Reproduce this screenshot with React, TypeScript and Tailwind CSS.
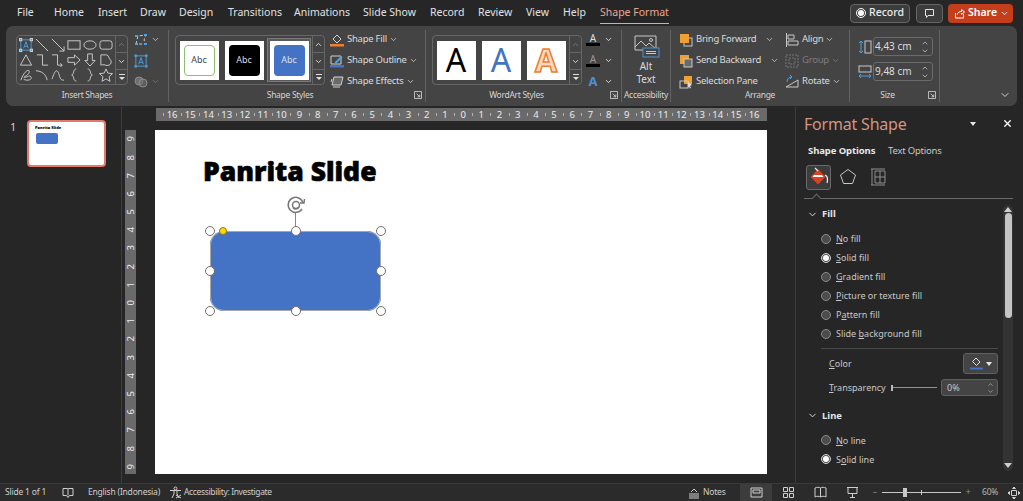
import { ReactNode } from 'react'
import { ChevronDown, ChevronUp, X } from 'lucide-react'

const tabs = [
  { name: 'File', w: 'w-[37px]' },
  { name: 'Home', w: 'w-[44px]' },
  { name: 'Insert', w: 'w-[42px]' },
  { name: 'Draw', w: 'w-[39px]' },
  { name: 'Design', w: 'w-[49px]' },
  { name: 'Transitions', w: 'w-[66px]' },
  { name: 'Animations', w: 'w-[69px]' },
  { name: 'Slide Show', w: 'w-[67px]' },
  { name: 'Record', w: 'w-[48px]' },
  { name: 'Review', w: 'w-[48px]' },
  { name: 'View', w: 'w-[37px]' },
  { name: 'Help', w: 'w-[37px]' },
]

const rulerTop = [16, 15, 14, 13, 12, 11, 10, 9, 8, 7, 6, 5, 4, 3, 2, 1, 0, 1, 2, 3, 4, 5, 6, 7, 8, 9, 10, 11, 12, 13, 14, 15, 16]
const rulerSide = [9, 8, 7, 6, 5, 4, 3, 2, 1, 0, 1, 2, 3, 4, 5, 6, 7, 8, 9]

// gallery glyphs, drawn on a 15x15 box
const shapeGlyphs = [
  <g key="a"><rect x="2" y="2" width="11" height="11" fill="none" stroke="#4aa3e0" /><path d="M5 11l2.500-7 2.500 7M6 9h3" stroke="#4aa3e0" fill="none" /><rect x="0.500" y="0.500" width="2.500" height="2.500" fill="#4aa3e0" /><rect x="12" y="0.500" width="2.500" height="2.500" fill="#4aa3e0" /><rect x="0.500" y="12" width="2.500" height="2.500" fill="#4aa3e0" /><rect x="12" y="12" width="2.500" height="2.500" fill="#4aa3e0" /></g>,
  <path key="b" d="M1 1l13 13" />,
  <path key="c" d="M1 1l13 13M14 9v5h-5" />,
  <rect key="d" x="1" y="3" width="13" height="9" />,
  <ellipse key="e" cx="7.500" cy="7.500" rx="6.500" ry="4.500" />,
  <rect key="f" x="1" y="3" width="13" height="9" rx="2.500" />,
  <path key="g" d="M7.500 2l6 11h-12z" />,
  <path key="h" d="M2 2h6v11h6" />,
  <path key="i" d="M1 2h6v11h5M10 11l2 2-2 2" />,
  <path key="j" d="M1 5h7V2l6 5.500-6 5.500V10H1z" />,
  <path key="k" d="M5 1h5v7h3l-5.500 6L2 8h3z" />,
  <path key="l" d="M2 2h6c3 0 2 5 5 6v2c0 3-4 4-6 3-2-1-5 0-5 0z" />,
  <path key="m" d="M2 13c3-9 9-13 9-9S3 10 6 10s6-3 7 0-5 4-8 2" />,
  <path key="n" d="M1 3c6 0 11 4 12 10" />,
  <path key="o" d="M1 12c2-5 3-9 5-9s3 6 4 8 2 2 4 2" />,
  <path key="p" d="M10 1C6 1 8 7 5 7.500 8 8 6 14 10 14" />,
  <path key="q" d="M5 1c4 0 2 6 5 6.500C7 8 9 14 5 14" />,
  <path key="r" d="M7.500 1l2 4.500 5 .500-3.700 3.300 1 5-4.300-2.600-4.300 2.600 1-5L.500 6l5-.500z" />,
]

function Chev({ className = 'text-[#d8d8d8]' }: { className?: string }) {
  return <ChevronDown size={9} strokeWidth={2} className={className} />
}

function RibbonGroup({ label, width, launcher, children }: { label: string; width: string; launcher?: boolean; children: ReactNode }) {
  return (
    <div className={`${width} my-1 flex flex-col border-r border-[#626262] h-[72px] shrink-0`}>
      <div className="h-[59px] pt-[5px] flex">{children}</div>
      <div className={`relative h-[13px] flex items-center justify-center text-[8.500px] tracking-[-0.3px] text-[#d4d4d4] whitespace-nowrap ${launcher ? 'pr-[14px]' : ''}`}>
        {label}
        {launcher && (
          <svg width="8" height="8" viewBox="0 0 9 9" className="absolute right-[3px] top-[2px]" fill="none" stroke="#cfcfcf">
            <path d="M.5 8.500V.5h8v8zM3 3l3.500 3.500M6.500 4v2.500H4" />
          </svg>
        )}
      </div>
    </div>
  )
}

function ScrollButtons({ dim }: { dim?: boolean }) {
  return (
    <div className="w-[12px] flex flex-col border-l border-[#666] text-[#e0e0e0]">
      <div className="h-[17px] flex items-center justify-center border-b border-[#666]">
        <ChevronUp size={9} strokeWidth={2.4} className={dim ? 'text-[#777]' : ''} />
      </div>
      <div className="h-[17px] flex items-center justify-center border-b border-[#666]">
        <ChevronDown size={9} strokeWidth={2.4} />
      </div>
      <div className="flex-1 flex flex-col items-center justify-center">
        <div className="w-[6px] h-px bg-[#e0e0e0] mb-[2px]" />
        <div className="w-0 h-0 border-x-[3px] border-x-transparent border-t-[3px] border-t-[#e0e0e0]" />
      </div>
    </div>
  )
}

function Gallery({ children, dim }: { children: ReactNode; dim?: boolean }) {
  return (
    <div className="h-[50px] flex border border-[#666] rounded-[4px]">
      {children}
      <ScrollButtons dim={dim} />
    </div>
  )
}

function Swatch({ selected, children }: { selected?: boolean; children: ReactNode }) {
  return (
    <div className={`w-[44px] h-[44px] flex items-center justify-center ${selected ? 'border border-[#7a7a7a] bg-[#5a5a5a]' : ''}`}>
      <div className="w-[39px] h-[39px] bg-white flex items-center justify-center">{children}</div>
    </div>
  )
}

function CommandRow({ icon, label, chevron, disabled, textW }: { icon: ReactNode; label: string; chevron?: boolean; disabled?: boolean; textW?: string }) {
  return (
    <div className="h-[21px] shrink-0 flex items-center">
      <div className="w-[14px] h-[14px] flex items-center justify-center">{icon}</div>
      <span className={`ml-[3px] text-[9.500px] tracking-[-0.25px] whitespace-nowrap ${textW ?? ''} ${disabled ? 'text-[#7c7c7c]' : 'text-[#dcdcdc]'}`}>{label}</span>
      {chevron && <Chev className={`ml-[2px] ${disabled ? 'text-[#7c7c7c]' : 'text-[#d8d8d8]'}`} />}
    </div>
  )
}

function Spinner({ value }: { value: string }) {
  return (
    <div className="w-[60px] h-[19px] flex items-center justify-between border border-[#6a6a6a] rounded-[3px] pl-[1px] pr-[3px] text-[10px] text-[#dcdcdc]">
      {value}
      <div className="flex flex-col text-[#d8d8d8]">
        <ChevronUp size={8} strokeWidth={2} />
        <ChevronDown size={8} strokeWidth={2} />
      </div>
    </div>
  )
}

function Radio({ label, checked }: { label: ReactNode; checked?: boolean }) {
  return (
    <div className="h-[19px] flex items-center pl-[17px] text-[9px] text-[#c8c8c8]">
      <div className={`w-[10px] h-[10px] rounded-full border flex items-center justify-center ${checked ? 'border-[#cfcfcf] bg-[#555]' : 'border-[#8a8a8a] bg-[#4c4c4c]'}`}>
        {checked && <div className="w-[6px] h-[6px] rounded-full bg-white" />}
      </div>
      <span className="ml-[5px] whitespace-nowrap">{label}</span>
    </div>
  )
}

function SectionHead({ label }: { label: string }) {
  return (
    <div className="flex items-center pl-[3px] text-[9.500px] font-bold text-[#e4e4e4]">
      <ChevronDown size={11} strokeWidth={2} />
      <span className="ml-[4px]">{label}</span>
    </div>
  )
}

function Handle({ pos }: { pos: string }) {
  return <div className={`absolute w-[10px] h-[10px] rounded-full bg-white border border-[#6f6f6f] ${pos}`} />
}

function StatusIcon({ children, active }: { children: ReactNode; active?: boolean }) {
  return (
    <div className={`w-[32px] h-[18px] flex items-center justify-center ${active ? 'bg-[#3c3c3c]' : ''}`}>
      <svg width="13" height="13" viewBox="0 0 13 13" fill="none" stroke="#d0d0d0">{children}</svg>
    </div>
  )
}

export default function App() {
  return (
    <div className="w-[1023px] h-[501px] flex flex-col overflow-hidden bg-[#262626] text-white font-['Noto_Sans',sans-serif]">
      {/* Tabs */}
      <div className="h-[26px] flex items-center pl-[17px] relative">
        {tabs.map((t) => (
          <div key={t.name} className={`${t.w} shrink-0 text-[10.5px] text-[#e2e2e2] whitespace-nowrap`}>{t.name}</div>
        ))}
        <div className="h-[26px] flex items-center text-[10.5px] text-[#e9a793] whitespace-nowrap border-b-0 relative">
          Shape Format
          <div className="absolute left-0 right-0 bottom-[2px] h-px bg-[#e9a793]" />
        </div>
        <div className="ml-auto mr-[10px] flex items-center">
          <div className="w-[60px] h-[19px] flex items-center justify-center border border-[#666] bg-[#3c3c3c] rounded-[4px] text-[10.5px] font-medium text-[#ececec]">
            <div className="w-[10px] h-[10px] rounded-full border border-white flex items-center justify-center mr-[3px]">
              <div className="w-[6px] h-[6px] rounded-full bg-white" />
            </div>
            Record
          </div>
          <div className="ml-[6px] w-[27px] h-[19px] flex items-center justify-center border border-[#666] bg-[#3c3c3c] rounded-[4px]">
            <svg width="11" height="11" viewBox="0 0 11 11" fill="none" stroke="#e4e4e4"><path d="M1.500 1.500h8v6H4L2.500 9.500v-2h-1z" /></svg>
          </div>
          <div className="ml-[5px] w-[65px] h-[19px] flex items-center pl-[6px] bg-[#c43e1c] rounded-[4px] text-[10.5px] font-semibold text-white">
            <svg width="11" height="11" viewBox="0 0 11 11" fill="none" stroke="#fff"><path d="M1.500 5v5h8V6M3.500 6.500c0-2 2-3 4-3V1.500l3 2.500-3 2.500V5" /></svg>
            <span className="ml-[3px]">Share</span>
            <ChevronDown size={9} strokeWidth={2.4} className="ml-auto mr-[4px]" />
          </div>
        </div>
      </div>

      {/* Ribbon */}
      <div className="mx-[6px] h-[80px] shrink-0 flex bg-[#444444] rounded-[7px]">
        <RibbonGroup label="Insert Shapes" width="w-[163px]">
          <div className="pl-[10px] flex">
            <Gallery dim>
              <div className="w-[98px] grid grid-cols-6 grid-rows-3 px-[1px] py-[1px]">
                {shapeGlyphs.map((g, i) => (
                  <div key={i} className="flex items-center justify-center">
                    <svg width="14" height="14" viewBox="0 0 15 15" fill="none" stroke="#cfcfcf">{g}</svg>
                  </div>
                ))}
              </div>
            </Gallery>
            <div className="ml-[6px] -mt-[6px] flex flex-col">
              <div className="h-[21px] shrink-0 flex items-center">
                <svg width="14" height="14" viewBox="0 0 14 14" fill="none"><path d="M2 11L4 3l8-1-2 5 2 4z" stroke="#cfcfcf" strokeDasharray="3 2" /><path d="M1 2h3v2H1zM10 1h3v2h-3zM1 10h3v2H1zM10 10h3v2h-3z" fill="#4aa3e0" /></svg>
                <Chev className="ml-[3px] text-[#d8d8d8]" />
              </div>
              <div className="h-[21px] shrink-0 flex items-center">
                <svg width="14" height="14" viewBox="0 0 15 15">{shapeGlyphs[0]}</svg>
              </div>
              <div className="h-[21px] shrink-0 flex items-center">
                <svg width="14" height="14" viewBox="0 0 14 14" fill="#6e6e6e" stroke="#8c8c8c"><circle cx="5" cy="6" r="4" /><circle cx="9" cy="8" r="4" fillOpacity="0.600" /></svg>
                <Chev className="ml-[3px] text-[#777]" />
              </div>
            </div>
          </div>
        </RibbonGroup>

        <RibbonGroup label="Shape Styles" width="w-[257px]" launcher>
          <div className="pl-[6px] flex">
            <Gallery>
              <div className="flex items-center gap-px px-[1px]">
                <Swatch>
                  <div className="w-[31px] h-[31px] rounded-[4px] border border-[#8fbf6e] bg-white flex items-center justify-center text-[9px] text-[#444]">Abc</div>
                </Swatch>
                <Swatch>
                  <div className="w-[31px] h-[31px] rounded-[4px] bg-black flex items-center justify-center text-[9px] text-[#ddd]">Abc</div>
                </Swatch>
                <Swatch selected>
                  <div className="w-[31px] h-[31px] rounded-[4px] bg-[#4472c4] flex items-center justify-center text-[9px] text-[#d8e2f4]">Abc</div>
                </Swatch>
              </div>
            </Gallery>
            <div className="ml-[5px] -mt-[6px] flex flex-col">
              <CommandRow
                label="Shape Fill"
                chevron
                icon={<svg width="14" height="14" viewBox="0 0 14 14" fill="none"><path d="M3 6l4-4 4 4-4 4z" stroke="#d0d0d0" /><rect y="11" width="14" height="2.500" fill="#ed7d31" /></svg>}
              />
              <CommandRow
                label="Shape Outline"
                chevron
                icon={<svg width="14" height="14" viewBox="0 0 14 14" fill="none"><path d="M11 2H1v8h10z" stroke="#d0d0d0" /><path d="M5 8l6-6 1.500 1.500-6 6H5z" fill="#4aa3e0" /><rect y="11" width="14" height="2.500" fill="#4472c4" /></svg>}
              />
              <CommandRow
                label="Shape Effects"
                chevron
                icon={<svg width="14" height="14" viewBox="0 0 14 14" fill="#6a6a6a" stroke="#d0d0d0"><path d="M4 2h9l-2 8H2z" /><path d="M1 7l1-3M3 12h7" fill="none" /></svg>}
              />
            </div>
          </div>
        </RibbonGroup>

        <RibbonGroup label="WordArt Styles" width="w-[196px]" launcher>
          <div className="pl-[6px] flex">
            <Gallery dim>
              <div className="flex items-center gap-px px-[1px]">
                <Swatch><span className="text-[32px] leading-none text-black">A</span></Swatch>
                <Swatch><span className="text-[32px] leading-none text-[#4472c4]">A</span></Swatch>
                <Swatch><span className="text-[32px] leading-none font-bold text-[#fbd9c3] [-webkit-text-stroke:1.500px_#ed7d31]">A</span></Swatch>
              </div>
            </Gallery>
            <div className="ml-[4px] -mt-[6px] flex flex-col">
              <div className="h-[21px] shrink-0 flex items-center">
                <div className="w-[14px] flex flex-col items-center text-[10px] leading-[10px] text-[#ddd]">A<div className="w-[14px] h-[3px] bg-black" /></div>
                <Chev className="ml-[4px]" />
              </div>
              <div className="h-[21px] shrink-0 flex items-center">
                <div className="w-[14px] flex flex-col items-center text-[10px] leading-[10px] text-[#999]">A<div className="w-[14px] h-[3px] bg-black" /></div>
                <Chev className="ml-[4px]" />
              </div>
              <div className="h-[21px] shrink-0 flex items-center">
                <div className="w-[14px] text-center text-[13px] font-bold leading-none text-[#4a90d9]">A</div>
                <Chev className="ml-[4px]" />
              </div>
            </div>
          </div>
        </RibbonGroup>

        <RibbonGroup label="Accessibility" width="w-[49px]">
          <div className="w-full flex flex-col items-center text-[10px] leading-[13px] text-[#dcdcdc]">
            <svg width="26" height="24" viewBox="0 0 26 24" fill="none" stroke="#c8c8c8" className="ml-[2px]">
              <path d="M1 1h21v14H1zM1 12l6-6 5 5 3-3 7 6" />
              <circle cx="17" cy="5" r="1.500" />
              <rect x="9" y="13" width="16" height="9" fill="#444" stroke="#4a90d9" />
              <path d="M12 16.500h10M12 18.500h10" />
            </svg>
            <span className="mt-[1px]">Alt</span>
            <span>Text</span>
          </div>
        </RibbonGroup>

        <RibbonGroup label="Arrange" width="w-[179px]">
          <div className="pl-[8px] flex">
            <div className="w-[106px] -mt-[6px] flex flex-col">
              <CommandRow
                label="Bring Forward"
                textW="w-[67px]"
                chevron
                icon={<svg width="14" height="14" viewBox="0 0 14 14" fill="none"><rect x="5" y="5" width="8" height="8" stroke="#c8c8c8" /><rect x="1" y="1" width="9" height="9" fill="#f0a030" /></svg>}
              />
              <CommandRow
                label="Send Backward"
                textW="w-[72px]"
                chevron
                icon={<svg width="14" height="14" viewBox="0 0 14 14" fill="none"><rect x="1" y="1" width="9" height="9" fill="#f0a030" /><rect x="5" y="5" width="8" height="8" fill="#6a6a6a" stroke="#c8c8c8" /></svg>}
              />
              <CommandRow
                label="Selection Pane"
                icon={<svg width="14" height="14" viewBox="0 0 14 14" fill="none"><rect x="5" y="1" width="8" height="8" fill="#f0a030" /><rect x="1" y="6" width="8" height="7" stroke="#c8c8c8" /><path d="M9 7l4 3-2 1 1 2-1 .500-1-2-1 1z" fill="#ddd" /></svg>}
              />
            </div>
            <div className="-mt-[6px] flex flex-col">
              <CommandRow
                label="Align"
                chevron
                icon={<svg width="14" height="14" viewBox="0 0 14 14" fill="none" stroke="#c8c8c8"><path d="M1.500 0v14M3 2h6v4H3zM3 8h10v4H3z" /></svg>}
              />
              <CommandRow
                label="Group"
                chevron
                disabled
                icon={<svg width="14" height="14" viewBox="0 0 14 14" fill="none" stroke="#777" strokeDasharray="2 1"><rect x="1" y="1" width="12" height="12" /><rect x="4" y="4" width="6" height="6" /></svg>}
              />
              <CommandRow
                label="Rotate"
                chevron
                icon={<svg width="14" height="14" viewBox="0 0 14 14" fill="none"><path d="M1 12l12-7v7z" stroke="#c8c8c8" /><path d="M2 7c0-3 2-5 5-5M5 0l2 2-2 2" stroke="#4aa3e0" /></svg>}
              />
            </div>
          </div>
        </RibbonGroup>

        <RibbonGroup label="Size" width="w-[90px]" launcher>
          <div className="pl-[8px] flex flex-col gap-[6px] pt-[2px]">
            <div className="flex items-center gap-[1px]">
              <svg width="14" height="14" viewBox="0 0 14 14" fill="none"><rect x="7" y="1" width="6" height="12" stroke="#c8c8c8" /><path d="M3 1v12M1 3l2-2 2 2M1 11l2 2 2-2" stroke="#4aa3e0" /></svg>
              <Spinner value="4,43 cm" />
            </div>
            <div className="flex items-center gap-[1px]">
              <svg width="14" height="14" viewBox="0 0 14 14" fill="none"><rect x="1" y="1" width="12" height="6" stroke="#c8c8c8" /><path d="M1 11h12M3 9l-2 2 2 2M11 9l2 2-2 2" stroke="#4aa3e0" /></svg>
              <Spinner value="9,48 cm" />
            </div>
          </div>
        </RibbonGroup>

        <div className="flex-1 flex items-end justify-end pr-[6px] pb-[5px]">
          <ChevronDown size={12} strokeWidth={1.800} className="text-[#e0e0e0]" />
        </div>
      </div>

      {/* Workspace */}
      <div className="flex-1 min-h-0 flex mt-px">
        {/* Thumbnails */}
        <div className="w-[122px] shrink-0 border-r border-[#3e3e3e] pt-[13px] flex items-start">
          <span className="w-[27px] pl-[10px] text-[11px] leading-none mt-[1px] text-[#d0d0d0]">1</span>
          <div className="w-[79px] h-[47px] rounded-[4px] border-2 border-[#e07b67] bg-white pl-[6px] pt-[3px]">
            <div className="text-[4px] leading-[5px] font-black text-black whitespace-nowrap">Panrita Slide</div>
            <div className="ml-[1px] mt-[3px] w-[22px] h-[11px] rounded-[2px] bg-[#4472c4]" />
          </div>
        </div>

        {/* Editing area */}
        <div className="w-[674px] shrink-0 border-r border-[#3e3e3e] flex flex-col">
          <div className="ml-[34px] mt-px w-[611px] h-[13px] pl-[7px] flex items-center bg-[#6a6a6a] overflow-hidden">
            {rulerTop.map((n, i) => (
              <div key={i} className="w-[18.200px] shrink-0 grid grid-cols-[1fr_auto_1fr] items-center text-[9.5px] leading-none text-[#ececec]">
                <div className="w-px h-[3px] bg-[#b4b4b4]" />
                {n}
              </div>
            ))}
          </div>
          <div className="flex mt-[9px]">
            <div className="ml-[3px] w-[11px] h-[344px] flex flex-col bg-[#6a6a6a] overflow-hidden">
              {rulerSide.map((n, i) => (
                <div key={i} className="h-[18.200px] shrink-0 flex items-center justify-center text-[9.500px] leading-none text-[#ececec]">
                  <span className="-rotate-90">{n}</span>
                </div>
              ))}
            </div>
            <div className="ml-[19px] w-[612px] h-[344px] bg-white relative">
              <div className="absolute left-[48px] top-[24px] text-[26.500px] leading-[34px] font-black text-black whitespace-nowrap [-webkit-text-stroke:0.6px_#000]">Panrita Slide</div>
              {/* selected shape */}
              <div className="absolute left-[55px] top-[101px] w-[171px] h-[80px] rounded-[14px] bg-[#4472c4]">
                <div className="absolute inset-0 border border-[#a8a8a8] rounded-[14px]" />
                <div className="absolute left-[85px] -top-[18px] w-px h-[18px] bg-[#888]" />
                <svg width="20" height="20" viewBox="0 0 20 20" fill="none" stroke="#777" strokeWidth="1.500" className="absolute left-[76px] -top-[36px]">
                  <path d="M16 14a7.500 7.500 0 1 1 1-6" />
                  <circle cx="10" cy="10" r="3.500" />
                  <path d="M14 8h4l.500-4M13 12a4.500 4.500 0 0 1-6 1" />
                </svg>
                <Handle pos="-left-[5px] -top-[5px]" />
                <div className="absolute left-[9px] -top-[4px] w-[8px] h-[8px] rounded-full bg-[#ffd800] border border-[#8a7a20]" />
                <Handle pos="left-[81px] -top-[5px]" />
                <Handle pos="-right-[5px] -top-[5px]" />
                <Handle pos="-left-[5px] top-[35px]" />
                <Handle pos="-right-[5px] top-[35px]" />
                <Handle pos="-left-[5px] -bottom-[5px]" />
                <Handle pos="left-[81px] -bottom-[5px]" />
                <Handle pos="-right-[5px] -bottom-[5px]" />
              </div>
            </div>
          </div>
        </div>

        {/* Format pane */}
        <div className="flex-1 min-w-0 pl-[8px] flex flex-col">
          <div className="h-[33px] flex items-center pr-[10px]">
            <span className="text-[16px] tracking-[-0.2px] text-[#d49480]">Format Shape</span>
            <div className="ml-auto w-0 h-0 border-x-[3.500px] border-x-transparent border-t-[4px] border-t-[#e8e8e8]" />
            <X size={11} strokeWidth={3} className="ml-[26px] text-white" />
          </div>
          <div className="flex pl-[4px] mt-[4px] text-[9.5px]">
            <span className="font-bold tracking-[-0.1px] text-[#e8e8e8] w-[80px]">Shape Options</span>
            <span className="tracking-[-0.2px] text-[#c8c8c8]">Text Options</span>
          </div>
          <div className="flex items-center h-[26px] mt-[6px] pl-[2px]">
            <div className="w-[25px] h-[25px] bg-[#3c3c3c] border border-[#6a6a6a] rounded-[3px] flex items-center justify-center">
              <svg width="20" height="20" viewBox="0 0 20 20">
                <path d="M9 2l7.500 8-7.500 7.500L1.500 10z" fill="#d8421e" />
                <path d="M5 8h8l1.500 2H3.500z" fill="#fff" />
                <path d="M6 1l3 3M16 8c2.500 1 3 4 2 8" stroke="#eee" fill="none" strokeWidth="1.200" />
              </svg>
            </div>
            <svg width="18" height="18" viewBox="0 0 18 18" fill="none" stroke="#c8c8c8" className="ml-[8px]"><path d="M9 1.500l7.500 5.500-3 8.500h-9l-3-8.500z" /></svg>
            <svg width="18" height="18" viewBox="0 0 18 18" fill="none" stroke="#8e8e8e" className="ml-[12px]"><path d="M2 1h14M2 17h14M3 1v16M6 3h10v12H6zM11 3v12M6 9h10" /></svg>
          </div>
          <div className="relative h-px bg-[#6a6a6a] mt-[8px] mr-[10px]">
            <div className="absolute left-[9px] -top-[3px] w-[7px] h-[7px] bg-[#262626] border-l border-t border-[#6a6a6a] rotate-45" />
          </div>

          <div className="flex flex-1 min-h-0 overflow-hidden">
            <div className="w-[199px] shrink-0 pt-[8px]">
              <SectionHead label="Fill" />
              <div className="mt-[8px] flex flex-col">
                <Radio label={<><u>N</u>o fill</>} />
                <Radio checked label={<><u>S</u>olid fill</>} />
                <Radio label={<><u>G</u>radient fill</>} />
                <Radio label={<><u>P</u>icture or texture fill</>} />
                <Radio label={<>P<u>a</u>ttern fill</>} />
                <Radio label={<>Slide <u>b</u>ackground fill</>} />
              </div>
              <div className="ml-[17px] mr-[5px] mt-[4px] h-px bg-[#4a4a4a]" />
              <div className="mt-[4px] h-[22px] flex items-center pl-[25px] pr-[5px] text-[9px] text-[#c8c8c8]">
                <span><u>C</u>olor</span>
                <div className="ml-auto w-[35px] h-[21px] flex items-center justify-center gap-[3px] bg-[#444] border border-[#606060] rounded-[3px]">
                  <svg width="13" height="13" viewBox="0 0 13 13" fill="none"><path d="M6 1l4 4-3.500 3.500-4-4z" stroke="#ddd" /><rect y="10.500" width="13" height="2" fill="#4472c4" /></svg>
                  <div className="w-0 h-0 border-x-[3px] border-x-transparent border-t-[4px] border-t-[#e8e8e8]" />
                </div>
              </div>
              <div className="mt-[4px] h-[18px] flex items-center pl-[25px] text-[9px] text-[#c8c8c8]">
                <span className="w-[62px]"><u>T</u>ransparency</span>
                <div className="w-[2px] h-[6px] bg-[#b8b8b8]" />
                <div className="w-[44px] h-px bg-[#909090]" />
                <div className="ml-[4px] w-[57px] h-[17px] flex items-center justify-between bg-[#444] border border-[#606060] rounded-[3px] pl-[5px] pr-[3px]">
                  0%
                  <div className="flex flex-col">
                    <ChevronUp size={7} strokeWidth={2} />
                    <ChevronDown size={7} strokeWidth={2} />
                  </div>
                </div>
              </div>
              <div className="mt-[12px]">
                <SectionHead label="Line" />
              </div>
              <div className="mt-[8px] flex flex-col">
                <Radio label={<><u>N</u>o line</>} />
                <Radio checked label={<>S<u>o</u>lid line</>} />
              </div>
            </div>
            {/* pane scrollbar */}
            <div className="w-[10px] ml-0 mt-[6px] mb-[12px] rounded-full bg-[#333] flex flex-col items-center pt-[2px]">
              <div className="w-0 h-0 border-x-[4px] border-x-transparent border-b-[5px] border-b-[#cfcfcf]" />
              <div className="w-[7px] h-[105px] mt-[1px] rounded-full bg-[#c4c4c4]" />
              <div className="mt-auto mb-[3px] w-0 h-0 border-x-[4px] border-x-transparent border-t-[5px] border-t-[#cfcfcf]" />
            </div>
          </div>
        </div>
      </div>

      {/* Status bar */}
      <div className="h-[18px] shrink-0 flex items-center pl-[5px] bg-[#2b2b2b] border-t border-[#3a3a3a] text-[8.500px] tracking-[-0.2px] text-[#cfcfcf]">
        <span className="w-[57px]">Slide 1 of 1</span>
        <svg width="12" height="12" viewBox="0 0 12 12" fill="none" stroke="#d0d0d0"><path d="M1 1.500h4.500l.500 1 .500-1H11v7H7.500L6 10.500 4.500 8.500H1zM6 2.500v6" /></svg>
        <span className="ml-[14px] w-[81px] whitespace-nowrap">English (Indonesia)</span>
        <svg width="13" height="13" viewBox="0 0 13 13" fill="none" stroke="#d0d0d0"><circle cx="6.500" cy="2.500" r="1.500" /><path d="M1 4.500h11M5 5v3l-2 4M8 5v3l2 4M7 9l5 3M12 9l-5 3" /></svg>
        <span className="ml-[2px] tracking-[-0.35px] whitespace-nowrap">Accessibility: Investigate</span>
        <div className="ml-auto w-[335px] flex items-center">
          <svg width="12" height="12" viewBox="0 0 12 12" fill="none" stroke="#d0d0d0"><path d="M1 7h10M1 9h10M1 11h10M3 5l3-3 3 3" /></svg>
          <span className="ml-[3px] w-[37px]">Notes</span>
          <StatusIcon active><path d="M1 2h11v9H1zM3 4h7v3H3z" /></StatusIcon>
          <StatusIcon><path d="M1.500 1.500h4v4h-4zM7.500 1.500h4v4h-4zM1.500 7.500h4v4h-4zM7.500 7.500h4v4h-4z" /></StatusIcon>
          <StatusIcon><path d="M1 2c2-1 4-1 5.500 0C8 1 10 1 12 2v9c-2-1-4-1-5.500 0C5 10 3 10 1 11zM6.500 2v9" /></StatusIcon>
          <StatusIcon><path d="M1 1.500h11M2 1.500v6h9v-6M6.500 7.500V11M4 11.500h5" /></StatusIcon>
          <span className="w-[14px] text-center text-[#9a9a9a]">−</span>
          <div className="relative w-[79px] h-px bg-[#c8c8c8]">
            <div className="absolute left-[21px] -top-[4px] w-[4px] h-[9px] bg-[#c8c8c8]" />
            <div className="absolute left-[39px] -top-[2px] w-px h-[5px] bg-[#c8c8c8]" />
          </div>
          <span className="w-[14px] text-center text-[#9a9a9a]">+</span>
          <span className="ml-[7px] w-[20px] text-[#b8b8b8]">60%</span>
          <svg width="12" height="12" viewBox="0 0 12 12" fill="none" stroke="#d0d0d0" className="ml-[6px]"><path d="M3.500 3.500h5v5h-5zM6 0L4.500 1.500h3zM6 12l-1.500-1.500h3zM0 6l1.500-1.500v3zM12 6l-1.500-1.500v3z" /></svg>
        </div>
      </div>
    </div>
  )
}
